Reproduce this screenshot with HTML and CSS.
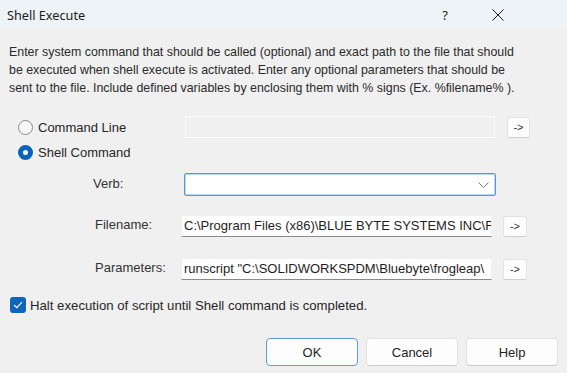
FILE: index.html
```html
<!DOCTYPE html>
<html>
<head>
<meta charset="utf-8">
<link rel="stylesheet" href="styles.css">
</head>
<body>
<div class="window">
  <div class="titlebar">
    <span class="title">Shell Execute</span>
    <span class="tb-help">?</span>
    <span class="tb-close">
      <svg width="12" height="12" viewBox="0 0 12 12"><path d="M0.5 0.5 L11.5 11.5 M11.5 0.5 L0.5 11.5" stroke="#1a1a1a" stroke-width="1" fill="none"/></svg>
    </span>
  </div>
  <div class="content">
    <p class="desc">Enter system command that should be called (optional) and exact path to the file that should<br>be executed when shell execute is activated. Enter any optional parameters that should be<br>sent to the file. Include defined variables by enclosing them with % signs (Ex. %filename% ).</p>

    <div class="row row-cmd">
      <label class="radio-cell"><span class="radio"></span>Command Line</label>
      <div class="field disabled"></div>
      <button class="arrow">-&gt;</button>
    </div>

    <div class="row row-shell">
      <label class="radio-cell"><span class="radio checked"></span>Shell Command</label>
    </div>

    <div class="row row-verb">
      <span class="lbl lbl-verb">Verb:</span>
      <div class="combo">
        <svg class="chev" width="11" height="6" viewBox="0 0 11 6"><path d="M0.5 0.5 L5.5 5.5 L10.5 0.5" stroke="#7a7a7a" stroke-width="1" fill="none"/></svg>
      </div>
    </div>

    <div class="row row-file">
      <span class="lbl">Filename:</span>
      <div class="field text">C:\Program Files (x86)\BLUE BYTE SYSTEMS INC\F</div>
      <button class="arrow arrow2">-&gt;</button>
    </div>

    <div class="row row-params">
      <span class="lbl">Parameters:</span>
      <div class="field text">runscript "C:\SOLIDWORKSPDM\Bluebyte\frogleap\</div>
      <button class="arrow arrow2">-&gt;</button>
    </div>

    <div class="row row-check">
      <span class="check">
        <svg width="10" height="8" viewBox="0 0 10 8"><path d="M1 4 L3.8 6.6 L9 1.2" stroke="#ffffff" stroke-width="1.2" fill="none"/></svg>
      </span>
      <span class="check-lbl">Halt execution of script until Shell command is completed.</span>
    </div>

    <div class="buttons">
      <button class="btn default">OK</button>
      <button class="btn">Cancel</button>
      <button class="btn">Help</button>
    </div>
  </div>
</div>
</body>
</html>
```

FILE: styles.css
```css
html, body {
  margin: 0;
  padding: 0;
}
body {
  width: 567px;
  height: 373px;
  background: #f0f0f0;
  overflow: hidden;
  font-family: "Liberation Sans", Arial, sans-serif;
  font-size: 13px;
  color: #262626;
}
.window {
  width: 567px;
  height: 373px;
  display: flex;
  flex-direction: column;
}
.titlebar {
  height: 29px;
  background: #eef3f7;
  display: flex;
  align-items: center;
  flex-shrink: 0;
}
.title {
  font-family: "Noto Sans", "Open Sans", sans-serif;
  font-size: 12.7px;
  color: #1a1a1a;
  padding-left: 7px;
  flex: 1;
}
.tb-help {
  font-family: "Noto Sans", sans-serif;
  font-size: 13px;
  color: #1a1a1a;
  width: 10px;
  margin-right: 42px;
  text-align: center;
}
.tb-close {
  width: 12px;
  height: 12px;
  display: flex;
  margin-right: 63px;
}
.content {
  padding: 14px 0 0 9px;
  display: flex;
  flex-direction: column;
}
.desc {
  margin: 0;
  line-height: 18px;
  width: 550px;
  white-space: nowrap;
  font-size: 12.4px;
  color: #2a2a2a;
}
.row {
  display: flex;
  align-items: center;
  height: 22px;
}
.row-cmd { margin-top: 19px; }
.row-shell { margin-top: 3px; }
.row-verb { margin-top: 10px; height: 23px; }
.row-file { margin-top: 19px; }
.row-params { margin-top: 21px; }
.row-check { margin-top: 16px; height: 18px; }

.radio-cell {
  width: 176px;
  display: flex;
  align-items: center;
  padding-left: 9px;
  box-sizing: border-box;
  font-size: 13px;
}
.radio {
  width: 13px;
  height: 13px;
  border: 1px solid #8b8b8b;
  border-radius: 50%;
  background: #f7f7f7;
  margin-right: 5px;
  box-sizing: content-box;
  flex-shrink: 0;
}
.radio.checked {
  width: 5px;
  height: 5px;
  border: 5px solid #0a63b8;
  background: #ffffff;
}
.field {
  width: 310px;
  height: 22px;
  box-sizing: border-box;
}
.field.disabled {
  border: 1px solid #fafafa;
  background: #f0f0f0;
}
.field.text {
  width: 311px;
  background: #ffffff;
  border: 1px solid #f0f0f0;
  border-bottom: 1px solid #8a8a8a;
  padding: 0 0 0 2px;
  line-height: 20px;
  white-space: nowrap;
  overflow: hidden;
  font-size: 13px;
  color: #1e1e1e;
}
.lbl {
  width: 86px;
  padding-left: 86px;
  font-size: 13px;
  color: #333333;
  margin-bottom: 4px;
}
.lbl-verb {
  padding-left: 84px;
  width: 91px;
  margin-bottom: 2px;
}
.combo {
  width: 312px;
  height: 23px;
  box-sizing: border-box;
  background: #ffffff;
  border: 1px solid #4f9be2;
  box-shadow: inset 0 0 0 1px #b8d7f3;
  border-radius: 2px;
  display: flex;
  align-items: center;
  justify-content: flex-end;
  padding-right: 6px;
}
.arrow {
  width: 23px;
  height: 21px;
  margin-left: 12px;
  padding: 0;
  background: #fdfdfd;
  border: 1px solid #e3e3e3;
  border-bottom-color: #cfcfcf;
  border-radius: 3px;
  font-family: "Liberation Sans", Arial, sans-serif;
  font-size: 11px;
  color: #333333;
}
.arrow2 {
  width: 24px;
  margin-left: 11px;
}
.check {
  width: 16px;
  height: 16px;
  margin-left: 1px;
  background: #0f65bb;
  border-radius: 3px;
  display: flex;
  align-items: center;
  justify-content: center;
  margin-right: 4px;
}
.check-lbl {
  font-size: 13.2px;
  color: #262626;
}
.buttons {
  margin-top: 24px;
  display: flex;
  justify-content: flex-end;
  gap: 8px;
  padding-right: 9px;
}
.btn {
  width: 92px;
  height: 28px;
  background: #fdfdfd;
  border: 1px solid #e2e2e2;
  border-bottom-color: #cccccc;
  border-radius: 4px;
  font-family: "Liberation Sans", Arial, sans-serif;
  font-size: 13px;
  color: #1e1e1e;
  padding: 0;
}
.btn.default {
  border: 1px solid #5a9fe0;
}
```
